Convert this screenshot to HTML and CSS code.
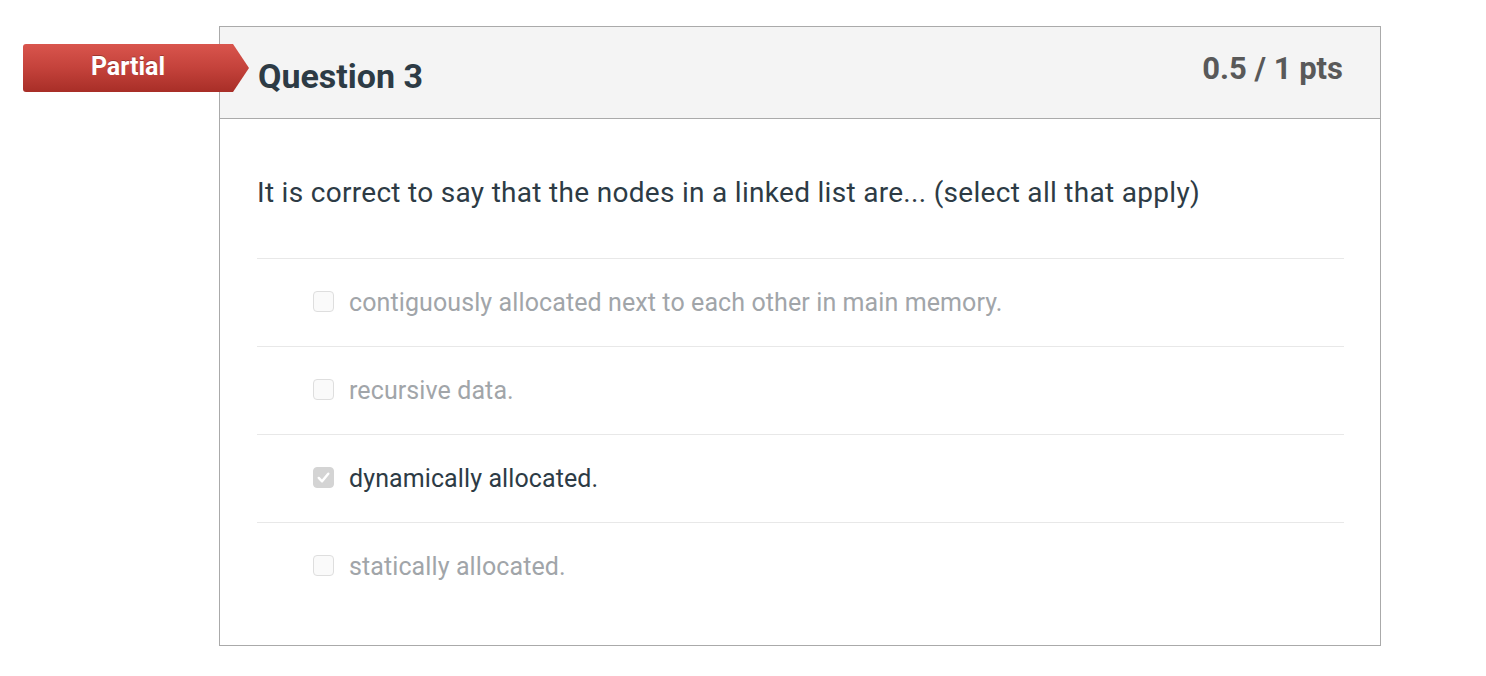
FILE: index.html
```html
<!DOCTYPE html>
<html lang="en">
<head>
<meta charset="utf-8">
<title>Question 3</title>
<link rel="stylesheet" href="styles.css">
</head>
<body>
<div class="page">
  <div class="card">
    <div class="badge"><span class="badge-text">Partial</span></div>
    <div class="card-header">
      <h2 class="title">Question 3</h2>
      <div class="points">0.5 / 1 pts</div>
    </div>
    <div class="card-body">
      <p class="question">It is correct to say that the nodes in a linked list are... (select all that apply)</p>
      <ul class="answers">
        <li class="answer">
          <span class="box"></span>
          <span class="label">contiguously allocated next to each other in main memory.</span>
        </li>
        <li class="answer">
          <span class="box"></span>
          <span class="label">recursive data.</span>
        </li>
        <li class="answer selected">
          <span class="box checked">
            <svg viewBox="0 0 20 20" width="20" height="20"><path d="M5 10.5 L8.5 14 L15 6" fill="none" stroke="#fff" stroke-width="2.6" stroke-linecap="round" stroke-linejoin="round"/></svg>
          </span>
          <span class="label">dynamically allocated.</span>
        </li>
        <li class="answer">
          <span class="box"></span>
          <span class="label">statically allocated.</span>
        </li>
      </ul>
    </div>
  </div>
</div>
</body>
</html>
```
FILE: styles.css
```css
html, body {
  margin: 0;
  padding: 0;
  background: #ffffff;
}

body {
  font-family: Roboto, "Liberation Sans", Arial, sans-serif;
  color: #2d3b45;
}

.page {
  padding: 26px 0 0 219px;
}

.card {
  position: relative;
  box-sizing: border-box;
  width: 1162px;
  border: 1px solid #aaaaaa;
  background: #ffffff;
}

.badge {
  position: absolute;
  left: -197px;
  top: 17px;
  width: 226px;
  height: 48px;
  background: linear-gradient(to bottom, #d9554d 0%, #c4423b 50%, #a82e27 100%);
  clip-path: polygon(0 0, 210px 0, 226px 24px, 210px 48px, 0 48px);
  border-radius: 3px 0 0 3px;
  display: flex;
  align-items: center;
  box-sizing: border-box;
  padding-right: 16px;
  justify-content: center;
}

.badge-text {
  color: #ffffff;
  font-weight: 700;
  font-size: 25px;
  line-height: 28px;
  margin-top: -3px;
  text-shadow: 0 -1px 0 rgba(0,0,0,0.25);
}

.card-header {
  display: flex;
  justify-content: space-between;
  align-items: flex-start;
  height: 91px;
  background: #f4f4f4;
  border-bottom: 1px solid #aaaaaa;
  padding: 0 37px 0 38px;
}

.title {
  margin: 29px 0 0 0;
  font-size: 34px;
  line-height: 40px;
  font-weight: 700;
  color: #2d3b45;
}

.points {
  margin-top: 22px;
  font-size: 31px;
  line-height: 40px;
  font-weight: 700;
  color: #595959;
}

.card-body {
  padding: 56px 36px 35px 37px;
}

.question {
  margin: 0 0 47px 0;
  font-size: 28px;
  line-height: 36px;
  letter-spacing: 0.3px;
  color: #2d3b45;
}

.answers {
  list-style: none;
  margin: 0;
  padding: 0;
}

.answer {
  box-sizing: border-box;
  display: flex;
  align-items: center;
  height: 88px;
  border-top: 1px solid #e8e8e8;
  padding-left: 56px;
}

.box {
  box-sizing: border-box;
  flex: none;
  width: 21px;
  height: 21px;
  border: 1px solid #dedede;
  border-radius: 4px;
  background: #fafafa;
  margin-right: 15px;
  margin-top: -2px;
  display: flex;
  align-items: center;
  justify-content: center;
}

.box.checked {
  background: #d4d4d4;
  border-color: #d4d4d4;
}

.box svg {
  width: 19px;
  height: 19px;
}

.label {
  font-size: 25px;
  line-height: 28px;
  letter-spacing: 0.1px;
  color: #a1a5a9;
}

.selected .label {
  color: #2d3b45;
}
```
